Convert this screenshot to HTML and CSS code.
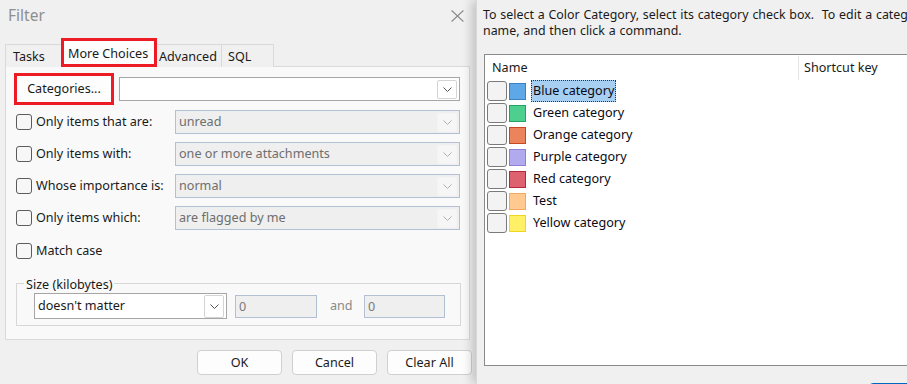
FILE: index.html
```html
<!DOCTYPE html>
<html>
<head>
<meta charset="utf-8">
<title>Filter</title>
<link rel="stylesheet" href="styles.css">
</head>
<body>
<div class="screen">
  <div class="filter">
    <div class="titlebar">
      <span class="title">Filter</span>
      <svg class="close" width="13" height="12" viewBox="0 0 13 12"><path d="M0.6 0.5 L12.4 11.5 M12.4 0.5 L0.6 11.5" stroke="#8c8c8c" stroke-width="1.1" fill="none"/></svg>
    </div>
    <div class="tabs">
      <div class="tab tab-tasks">Tasks</div>
      <div class="tab tab-active">More Choices</div>
      <div class="tab tab-adv">Advanced</div>
      <div class="tab tab-sql">SQL</div>
    </div>
    <div class="panel">
      <div class="row row-cat">
        <div class="cat-box"><span class="cat-btn">Categories...</span></div>
        <div class="combo combo-cat">
          <span class="combo-text"></span>
          <span class="drop"><svg width="9" height="5" viewBox="0 0 9 5"><path d="M0.5 0.5 L4.5 4.5 L8.5 0.5" stroke="#555" fill="none"/></svg></span>
        </div>
      </div>
      <div class="row row-opt">
        <span class="check"></span><span class="label">Only items that are:</span>
        <div class="combo combo-dis"><span class="combo-text">unread</span><span class="drop"><svg width="9" height="5" viewBox="0 0 9 5"><path d="M0.5 0.5 L4.5 4.5 L8.5 0.5" stroke="#b0b0b0" fill="none"/></svg></span></div>
      </div>
      <div class="row row-opt">
        <span class="check"></span><span class="label">Only items with:</span>
        <div class="combo combo-dis"><span class="combo-text">one or more attachments</span><span class="drop"><svg width="9" height="5" viewBox="0 0 9 5"><path d="M0.5 0.5 L4.5 4.5 L8.5 0.5" stroke="#b0b0b0" fill="none"/></svg></span></div>
      </div>
      <div class="row row-opt">
        <span class="check"></span><span class="label">Whose importance is:</span>
        <div class="combo combo-dis"><span class="combo-text">normal</span><span class="drop"><svg width="9" height="5" viewBox="0 0 9 5"><path d="M0.5 0.5 L4.5 4.5 L8.5 0.5" stroke="#b0b0b0" fill="none"/></svg></span></div>
      </div>
      <div class="row row-opt">
        <span class="check"></span><span class="label">Only items which:</span>
        <div class="combo combo-dis"><span class="combo-text">are flagged by me</span><span class="drop"><svg width="9" height="5" viewBox="0 0 9 5"><path d="M0.5 0.5 L4.5 4.5 L8.5 0.5" stroke="#b0b0b0" fill="none"/></svg></span></div>
      </div>
      <div class="row row-match">
        <span class="check"></span><span class="label">Match case</span>
      </div>
      <fieldset class="group">
        <legend class="legend">Size (kilobytes)</legend>
        <div class="size-row">
          <div class="combo combo-size"><span class="combo-text">doesn't matter</span><span class="drop"><svg width="9" height="5" viewBox="0 0 9 5"><path d="M0.5 0.5 L4.5 4.5 L8.5 0.5" stroke="#555" fill="none"/></svg></span></div>
          <div class="input-dis">0</div>
          <span class="and">and</span>
          <div class="input-dis input-b">0</div>
        </div>
      </fieldset>
    </div>
    <div class="buttons">
      <div class="btn">OK</div>
      <div class="btn">Cancel</div>
      <div class="btn">Clear All</div>
    </div>
  </div>

  <div class="catdlg">
    <div class="intro">To select a Color Category, select its category check box.  To edit a category, select the category
name, and then click a command.</div>
    <div class="listbox">
      <div class="lhead">
        <span class="col-name">Name</span>
        <span class="col-key">Shortcut key</span>
      </div>
      <div class="lrow"><span class="lcheck"></span><span class="swatch sw-blue"></span><span class="lname lname-sel">Blue category</span></div>
      <div class="lrow"><span class="lcheck"></span><span class="swatch sw-green"></span><span class="lname">Green category</span></div>
      <div class="lrow"><span class="lcheck"></span><span class="swatch sw-orange"></span><span class="lname">Orange category</span></div>
      <div class="lrow"><span class="lcheck"></span><span class="swatch sw-purple"></span><span class="lname">Purple category</span></div>
      <div class="lrow"><span class="lcheck"></span><span class="swatch sw-red"></span><span class="lname">Red category</span></div>
      <div class="lrow"><span class="lcheck"></span><span class="swatch sw-test"></span><span class="lname">Test</span></div>
      <div class="lrow"><span class="lcheck"></span><span class="swatch sw-yellow"></span><span class="lname">Yellow category</span></div>
    </div>
    <div class="bluebtn"></div>
  </div>
</div>
</body>
</html>
```

FILE: styles.css
```css
* { box-sizing: border-box; }
html, body { margin: 0; padding: 0; }
body {
  width: 907px;
  height: 384px;
  overflow: hidden;
  font-family: "Noto Sans", "Open Sans", sans-serif;
  font-size: 12.6px;
  color: #1a1a1a;
  background: #f0f0f0;
}
.screen {
  display: flex;
  width: 907px;
  height: 384px;
  overflow: hidden;
}

/* ---------- Filter dialog ---------- */
.filter {
  flex: none;
  width: 476px;
  height: 384px;
  background: #f0f0f0;
}
.titlebar {
  height: 30px;
  display: flex;
  align-items: center;
  justify-content: space-between;
  padding: 0 12px 0 8px;
}
.title {
  font-size: 15.5px;
  color: #8f8f8f;
  line-height: 18px;
  margin-top: -1px;
}
.close { display: block; margin-top: 1px; }

.tabs {
  margin-top: 8px;
  height: 29px;
  display: flex;
  align-items: flex-end;
  padding-left: 5px;
}
.tab {
  height: 23px;
  border: 1px solid #d9d9d9;
  border-bottom: none;
  background: #f0f0f0;
  line-height: 20px;
  padding-top: 2px;
  white-space: nowrap;
}
.tab-tasks { width: 56px; padding-left: 7px; border-right: none; }
.tab-adv { width: 65px; padding-left: 2px; border-left: none; }
.tab-sql { width: 52px; padding-left: 6px; border-left: none; }
.tab-active {
  position: relative;
  z-index: 1;
  width: 96px;
  height: 29px;
  border: 3px solid #ed1c24;
  background: #fdfdfd;
  padding-left: 4px;
  line-height: 20px;
  padding-top: 3px;
}

.panel {
  margin-left: 5px;
  margin-top: -1px;
  width: 465px;
  height: 274px;
  border: 1px solid #dadada;
  background: #f9f9f9;
  padding: 6px 0 0 8px;
}
.row { display: flex; align-items: center; }
.row-cat { height: 32px; }
.cat-box {
  width: 100px;
  height: 32px;
  border: 3px solid #ed1c24;
  background: #fdfdfd;
  display: flex;
  align-items: center;
  justify-content: center;
}
.cat-btn { line-height: 16px; }

.combo {
  display: flex;
  align-items: center;
  height: 24px;
  border: 1px solid #a6a6a6;
  background: #ffffff;
}
.combo-text {
  flex: 1;
  padding-left: 3px;
  line-height: 16px;
  white-space: nowrap;
}
.drop {
  width: 20px;
  height: 19px;
  margin-right: 2px;
  border: 1px solid #d4d4d4;
  border-radius: 2px;
  background: #ffffff;
  display: flex;
  align-items: center;
  justify-content: center;
}
.drop svg { display: block; }
.combo-cat { width: 341px; margin-left: 5px; }

.row-opt { height: 24px; margin-top: 8px; }
.row-opt:nth-child(2) { margin-top: 5px; }
.check {
  width: 16px;
  height: 16px;
  margin-left: 2px;
  border: 1px solid #5c5c5c;
  border-radius: 3px;
  background: #f7f7f7;
  flex: none;
}
.label {
  width: 143px;
  padding-left: 4px;
  line-height: 16px;
  white-space: nowrap;
}
.combo-dis {
  width: 285px;
  border-color: #b3c0d3;
  background: #efefef;
  color: #6e6e6e;
}
.combo-dis .drop {
  border-color: #f4f4f4;
  background: #f6f6f6;
}
.row-match { height: 24px; margin-top: 9px; }

.group {
  margin: 10px 0 0 2px;
  width: 445px;
  height: 53px;
  border: 1px solid #d7d7d7;
  padding: 0 0 0 17px;
}
.legend {
  padding: 4px 2px 0 2px;
  margin-left: -10px;
  line-height: 16px;
}
.size-row {
  display: flex;
  align-items: center;
  margin-top: 0;
}
.combo-size { width: 193px; height: 26px; }
.combo-size .drop { height: 23px; }
.input-dis {
  width: 82px;
  height: 23px;
  margin-left: 8px;
  border: 1px solid #b3c0d3;
  background: #efefef;
  color: #7a7a7a;
  padding-left: 3px;
  line-height: 21px;
}
.and {
  width: 47px;
  color: #8a8a8a;
  padding-left: 13px;
  line-height: 16px;
}
.input-b { width: 81px; margin-left: 0; }

.buttons {
  display: flex;
  justify-content: flex-end;
  gap: 10px;
  padding-right: 4px;
  margin-top: 10px;
}
.btn {
  width: 85px;
  height: 25px;
  border: 1px solid #d0d0d0;
  border-radius: 4px;
  background: #fdfdfd;
  text-align: center;
  line-height: 23px;
}

/* ---------- Color categories dialog ---------- */
.catdlg {
  position: relative;
  z-index: 2;
  flex: none;
  width: 460px;
  height: 384px;
  background: #f0f0f0;
  border-left: 1px solid #d8d8d8;
  box-shadow: -4px 0 10px rgba(0, 0, 0, 0.2);
}
.intro {
  padding: 7px 0 0 6px;
  line-height: 16px;
  font-size: 12.4px;
  word-spacing: 0.6px;
  white-space: pre;
  overflow: hidden;
  color: #1a1a1a;
}
.listbox {
  margin: 15px 0 0 7px;
  width: 460px;
  height: 312px;
  border: 1px solid #8a8a8a;
  background: #ffffff;
}
.lhead {
  height: 26px;
  display: flex;
  align-items: center;
}
.col-name {
  width: 313px;
  padding-left: 7px;
  line-height: 16px;
}
.col-key {
  height: 24px;
  border-left: 1px solid #e5e5e5;
  padding-left: 5px;
  line-height: 24px;
}
.lrow {
  height: 22px;
  display: flex;
  align-items: center;
}
.lrow:nth-child(2) { margin-top: -1px; }
.lcheck {
  width: 20px;
  height: 20px;
  margin-left: 2px;
  border: 1px solid #7a7a7a;
  border-radius: 3px;
  background: #f3f3f3;
  flex: none;
}
.swatch {
  width: 17px;
  height: 17px;
  margin-left: 2px;
  border: 1px solid;
  flex: none;
}
.sw-blue { background: #5ea8e8; border-color: #3a82c8; }
.sw-green { background: #4fcf8e; border-color: #1fa463; }
.sw-orange { background: #eb845c; border-color: #c9491c; }
.sw-purple { background: #b2aaee; border-color: #8d80da; }
.sw-red { background: #de616f; border-color: #b8283a; }
.sw-test { background: #ffc98f; border-color: #f2a762; }
.sw-yellow { background: #fff066; border-color: #f2d51d; }
.lname {
  margin-left: 5px;
  padding: 1px 1px 2px 1px;
  line-height: 17px;
  border: 1px dotted transparent;
  color: #0a0a14;
}
.lname-sel {
  background: #a6cff2;
  border-color: #333333;
}
.bluebtn {
  margin: 17px 0 0 392px;
  width: 90px;
  height: 25px;
  border: 1px solid #0067c0;
  border-radius: 4px;
  background: #fdfdfd;
}
```
